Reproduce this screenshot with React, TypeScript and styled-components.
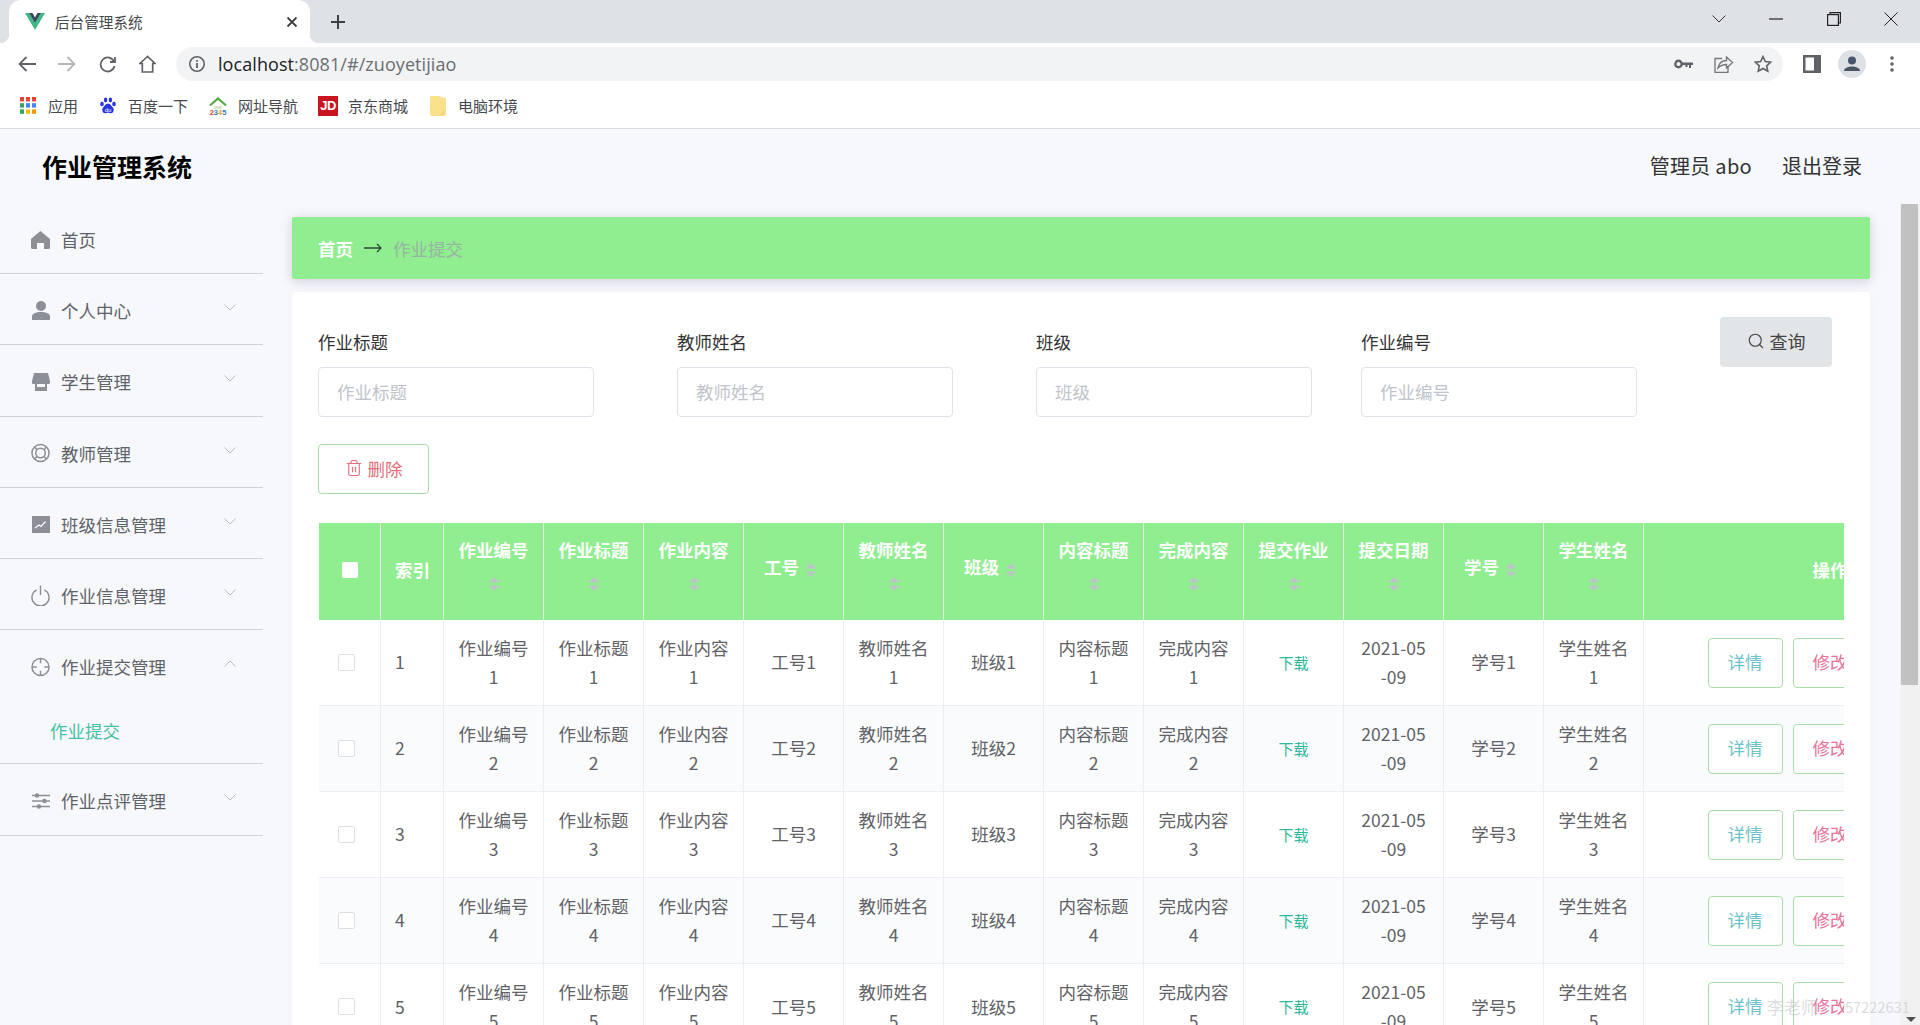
import React from 'react';
import styled, { createGlobalStyle } from 'styled-components';
import { Search, Trash2 } from 'lucide-react';

const CJK = `"Noto Sans CJK SC", "Open Sans", sans-serif`;

const GlobalStyle = createGlobalStyle`
  html, body {
    margin: 0;
    height: 100%;
    overflow: hidden;
    font-family: ${CJK};
    background: #f6f8fc;
  }
  * { box-sizing: border-box; }
`;

const Page = styled.div`
  position: relative;
  width: 1920px;
  height: 1025px;
  overflow: hidden;
  display: flex;
  flex-direction: column;
`;

/* browser chrome */
const TabStrip = styled.div`
  height: 43px;
  flex: none;
  background: #dee1e6;
  display: flex;
  align-items: flex-end;
  padding-left: 9px;
`;

const Tab = styled.div`
  position: relative;
  width: 301px;
  height: 43px;
  background: #fff;
  border-radius: 12px 12px 0 0;
  display: flex;
  align-items: center;
  padding: 0 12px 0 16px;
  font-size: 14.6px;
  color: #45484c;

  &::before, &::after {
    content: '';
    position: absolute;
    bottom: 0;
    width: 9px;
    height: 9px;
  }
  &::before {
    left: -9px;
    background: radial-gradient(circle at 0 0, #dee1e6 9px, #fff 9.5px);
  }
  &::after {
    right: -9px;
    background: radial-gradient(circle at 100% 0, #dee1e6 9px, #fff 9.5px);
  }
`;

const TabTitle = styled.span`
  margin-left: 10px;
  flex: 1;
`;

const NewTab = styled.div`
  margin-left: 15px;
  width: 26px;
  height: 43px;
  display: flex;
  align-items: center;
  justify-content: center;
`;

const WindowControls = styled.div`
  margin-left: auto;
  display: flex;
  align-self: stretch;
`;

const WindowButton = styled.div`
  width: 57.5px;
  display: flex;
  align-items: center;
  justify-content: center;
  padding-bottom: 6px;
`;

const Toolbar = styled.div`
  height: 42px;
  flex: none;
  background: #fff;
  display: flex;
  align-items: center;
  padding: 0 8px 0 7px;
`;

const ToolButton = styled.div`
  width: 40px;
  height: 34px;
  flex: none;
  display: flex;
  align-items: center;
  justify-content: center;
`;

const Omnibox = styled.div`
  flex: 1;
  height: 34px;
  margin: 0 9px;
  border-radius: 17px;
  background: #f1f3f4;
  display: flex;
  align-items: center;
  padding-left: 12px;
`;

const Url = styled.div`
  margin-left: 12px;
  flex: 1;
  font-family: "Open Sans", sans-serif;
  font-size: 18px;
  letter-spacing: 0.07px;
  color: #6b6e72;

  b {
    font-weight: 400;
    color: #202124;
  }
`;

const Bookmarks = styled.div`
  height: 44px;
  flex: none;
  background: #fff;
  border-bottom: 1px solid #d9dce1;
  display: flex;
  align-items: center;
  gap: 20px;
  padding: 0 18px 2px;
`;

const Bookmark = styled.div`
  display: flex;
  align-items: center;
  gap: 10px;
  font-size: 15px;
  color: #45484c;
`;

const BookmarkIcon = styled.span`
  width: 20px;
  height: 20px;
  display: flex;
  align-items: center;
  justify-content: center;
`;

const JdMark = styled.span`
  width: 20px;
  height: 20px;
  background: #c9151e;
  color: #fff;
  font-family: "Liberation Sans", sans-serif;
  font-size: 13px;
  font-weight: 700;
  letter-spacing: -0.5px;
  display: flex;
  align-items: center;
  justify-content: center;
`;

/* app */
const Header = styled.header`
  height: 74px;
  flex: none;
  display: flex;
  align-items: center;
  padding: 0 58px 1px 42px;
`;

const Logo = styled.div`
  font-size: 25px;
  font-weight: 700;
  color: #000;
`;

const HeaderRight = styled.div`
  margin-left: auto;
  display: flex;
  gap: 30px;
  font-size: 20px;
  color: #333;
`;

const UserName = styled.span`
  letter-spacing: 0.3px;
`;

const Body = styled.div`
  flex: 1;
  min-height: 0;
  display: flex;
`;

const Sidebar = styled.nav`
  width: 263px;
  flex: none;
  font-size: 17.5px;
  color: #5f6368;
`;

const MenuItem = styled.div`
  border-bottom: 1px solid #cfd2d8;
`;

const MenuHead = styled.div`
  height: 70.2px;
  display: flex;
  align-items: center;
  padding: 3px 27px 0 31px;
`;

const MenuIcon = styled.span`
  width: 19px;
  height: 20px;
  margin-right: 11px;
  display: flex;
  align-items: center;
  justify-content: center;
`;

const Chevron = styled.svg`
  margin-left: auto;
  margin-bottom: 6px;
`;

const SubItem = styled.div`
  height: 63px;
  display: flex;
  align-items: center;
  padding: 0 0 3px 50px;
  color: #45c2a5;
`;

const Content = styled.main`
  flex: 1;
  min-width: 0;
  padding: 14px 30px 0 29px;
  overflow: hidden;
`;

const ScrollTrack = styled.div`
  position: relative;
  width: 20px;
  flex: none;
  margin-top: 1px;
  background: #f1f1f1;
`;

const ScrollThumb = styled.div`
  margin-left: 1px;
  width: 17px;
  height: 481px;
  background: #c1c1c1;
`;

const ScrollArrow = styled.div`
  position: absolute;
  right: 4px;
  bottom: 3px;
  width: 0;
  height: 0;
  border-left: 5px solid transparent;
  border-right: 5px solid transparent;
  border-top: 5px solid #505050;
`;

const Crumbs = styled.div`
  height: 62px;
  background: #90ee90;
  border-radius: 2px;
  box-shadow: 0 2px 12px rgba(70, 60, 90, 0.22);
  display: flex;
  align-items: center;
  padding: 0 26px;
  font-size: 17.5px;
  gap: 11px;
`;

const CrumbHome = styled.span`
  color: #fff;
  font-weight: 700;
`;

const CrumbCurrent = styled.span`
  color: #97b3a2;
`;

const Card = styled.section`
  margin-top: 13px;
  height: 900px;
  background: #fff;
  border-radius: 4px;
  padding: 25px 26px 0;
  box-shadow: 0 2px 12px rgba(0, 0, 0, 0.02);
`;

const FormRow = styled.div`
  display: flex;
  align-items: flex-start;
`;

const Field = styled.div<{ $gap: number }>`
  width: 276px;
  margin-right: ${(p) => p.$gap}px;
`;

const FieldLabel = styled.div`
  height: 50px;
  line-height: 50px;
  font-size: 17.5px;
  color: #333;
`;

const TextInput = styled.input`
  display: block;
  width: 100%;
  height: 50px;
  border: 1px solid #dfe2e8;
  border-radius: 4px;
  padding: 0 18px 2px;
  font-family: ${CJK};
  font-size: 17.5px;
  outline: none;

  &::placeholder {
    color: #c0c4cc;
  }
`;

const QueryButton = styled.button`
  width: 112px;
  height: 50px;
  border: 0;
  border-radius: 4px;
  background: #e2e5e8;
  color: #444;
  font-family: ${CJK};
  font-size: 18px;
  display: flex;
  align-items: center;
  justify-content: center;
  gap: 5px;
  padding: 0 0 3px;
`;

const DeleteButton = styled.button`
  display: flex;
  align-items: center;
  justify-content: center;
  gap: 5px;
  margin-top: 27px;
  width: 111px;
  height: 50px;
  background: #fff;
  border: 1px solid #a8dea8;
  border-radius: 4px;
  color: #e4707c;
  font-family: ${CJK};
  font-size: 17.5px;
  padding: 0 0 2px;
`;

const TableWrap = styled.div`
  margin: 29px 0 0 1px;
  width: 1525px;
  overflow: hidden;
`;

const Table = styled.table`
  width: 1698px;
  table-layout: fixed;
  border-collapse: separate;
  border-spacing: 0;
  font-size: 17.5px;
  color: #5f6266;
`;

const Th = styled.th<{ $left?: boolean }>`
  height: 97px;
  padding: ${(p) => (p.$left ? '0 0 4px 14px' : '0 14px 4px')};
  background: #90ee90;
  color: #fff;
  font-weight: 700;
  line-height: 28px;
  text-align: ${(p) => (p.$left ? 'left' : 'center')};
  word-break: break-all;
  border-right: 1px solid #e6f3e6;
`;

const CaretBox = styled.span`
  display: inline-flex;
  width: 24px;
  height: 39px;
  align-items: center;
  justify-content: center;
  vertical-align: middle;
`;

const Td = styled.td<{ $even: boolean; $left?: boolean }>`
  height: 86.1px;
  padding: 0 14px;
  line-height: 28.7px;
  text-align: ${(p) => (p.$left ? 'left' : 'center')};
  word-break: break-all;
  background: ${(p) => (p.$even ? '#fafbfd' : '#fff')};
  border-right: 1px solid #ebeef5;
  border-bottom: 1px solid #ebeef5;
`;

const HeadCheck = styled.span`
  display: block;
  margin: 0 auto;
  width: 16px;
  height: 16px;
  border-radius: 2px;
  background: #fff;
`;

const RowCheck = styled.span`
  display: block;
  margin: 0 0 0 5px;
  width: 17px;
  height: 17px;
  border: 1px solid #dcdfe6;
  border-radius: 2px;
  background: #fff;
`;

const DownloadLink = styled.span`
  font-size: 15px;
  color: #2fb89a;
`;

const Actions = styled.div`
  display: flex;
  justify-content: center;
  gap: 10px;
`;

const ActionButton = styled.button<{ $color: string }>`
  width: 75px;
  height: 50px;
  flex: none;
  padding: 0 0 2px;
  background: #fff;
  border: 1px solid #a8dea8;
  border-radius: 4px;
  font-family: ${CJK};
  font-size: 17.5px;
  color: ${(p) => p.$color};
`;

const Watermark = styled.div`
  position: absolute;
  left: 1767px;
  top: 995px;
  display: flex;
  align-items: center;
  gap: 27px;
  font-size: 17px;
  line-height: 24px;
  color: rgba(190, 190, 190, 0.55);
`;

const WatermarkDigits = styled.span`
  font-size: 14.6px;
`;

const Caret = () => (
  <svg width="10" height="14" viewBox="0 0 10 14">
    <path d="M5 0 10 5.500H0zM5 14 0 8.500h10z" fill="#bcc3c8" />
  </svg>
);

const VueLogo = () => (
  <svg width="20" height="17" viewBox="0 0 20 17">
    <path d="M0 0h4l6 10L16 0h4L10 17z" fill="#41b883" />
    <path d="M4 0h3.5L10 4.5 12.5 0H16l-6 10z" fill="#35495e" />
  </svg>
);

const AppsIcon = () => {
  const colors = ['#ea4335', '#ea4335', '#ea4335', '#34a853', '#4285f4', '#4285f4', '#34a853', '#fbbc05', '#f29900'];
  return (
    <svg width="16" height="17" viewBox="0 0 16 17">
      {colors.map((c, i) => (
        <rect key={i} x={(i % 3) * 6} y={Math.floor(i / 3) * 6.2} width="4" height="4.4" fill={c} />
      ))}
    </svg>
  );
};

const BaiduIcon = () => (
  <svg width="16" height="18" viewBox="0 0 16 18">
    <g fill="#2932e1">
      <ellipse cx="2" cy="7" rx="1.8" ry="2.3" />
      <ellipse cx="5.6" cy="3" rx="1.7" ry="2.4" />
      <ellipse cx="10.4" cy="3" rx="1.7" ry="2.4" />
      <ellipse cx="14" cy="7" rx="1.8" ry="2.3" />
      <path d="M8 6.5c2.4 0 3 2.4 4.7 3.8 1.8 1.6 1.2 6-1.7 6-1.2 0-1.900-.5-3-.5s-1.800.5-3 .5c-2.900 0-3.500-4.400-1.700-6C5 8.900 5.600 6.500 8 6.500z" />
    </g>
    <text x="8" y="15" textAnchor="middle" fontSize="6" fill="#fff" fontFamily="Liberation Sans">du</text>
  </svg>
);

const Icon2345 = () => (
  <svg width="20" height="20" viewBox="0 0 20 20">
    <path d="M1 9 10 1l9 8-1.800 1L10 4 2.800 10z" fill="#5aa845" />
    <path d="M6 10h8v3H6z" fill="#d5e8c8" />
    <text x="10" y="19" textAnchor="middle" fontSize="7.500" fontWeight="700" fill="#d43f3a" fontFamily="Liberation Sans">
      2<tspan fill="#2f7fc1">3</tspan><tspan fill="#e0a020">4</tspan><tspan fill="#2f7fc1">5</tspan>
    </text>
  </svg>
);

const FolderIcon = () => (
  <svg width="16" height="20" viewBox="0 0 16 20">
    <path d="M1 0h9l1.500 1.500H14a2 2 0 0 1 2 2V18a2 2 0 0 1-2 2H2a2 2 0 0 1-2-2V1a1 1 0 0 1 1-1z" fill="#fbe08a" />
    <path d="M12 19l2-4" stroke="#e8c860" fill="none" />
  </svg>
);

const SideIcon = ({ name }: { name: string }) => {
  const c = '#8c8f96';
  if (name === 'home') {
    return (
      <svg width="19" height="18" viewBox="0 0 19 18">
        <path d="M9.500 0 19 8v8.500a1.500 1.500 0 0 1-1.500 1.500H13v-6H6v6H1.500A1.500 1.500 0 0 1 0 16.500V8z" fill={c} />
      </svg>
    );
  }
  if (name === 'user') {
    return (
      <svg width="18" height="19" viewBox="0 0 18 19">
        <circle cx="9" cy="5" r="5" fill={c} />
        <path d="M0 15.500C0 12.500 4 11 9 11s9 1.500 9 4.500V19H0z" fill={c} />
      </svg>
    );
  }
  if (name === 'store') {
    return (
      <svg width="18" height="18" viewBox="0 0 18 18">
        <path d="M2 0h14l2 8a2 2 0 0 1-2 3H2a2 2 0 0 1-2-3z" fill={c} />
        <path d="M3 11v7h12v-7h-2v3H5v-3z" fill={c} />
      </svg>
    );
  }
  if (name === 'buoy') {
    return (
      <svg width="20" height="20" viewBox="0 0 20 20" fill="none" stroke={c} strokeWidth="1.600">
        <circle cx="10" cy="10" r="9" />
        <circle cx="10" cy="10" r="5" />
        <path d="M4 4l2.500 2.500M16 4l-2.500 2.500M4 16l2.500-2.500M16 16l-2.500-2.500" />
      </svg>
    );
  }
  if (name === 'chart') {
    return (
      <svg width="18" height="17" viewBox="0 0 18 17">
        <rect width="18" height="17" fill={c} />
        <path d="M3 12l4-3 2 1.500 4-4.500 1 0" stroke="#fff" strokeWidth="1.200" fill="none" />
      </svg>
    );
  }
  if (name === 'power') {
    return (
      <svg width="20" height="21" viewBox="0 0 20 21" fill="none" stroke={c} strokeWidth="1.500">
        <path d="M6 4.500a9 9 0 1 0 8 0" />
        <path d="M10 0v10" />
      </svg>
    );
  }
  if (name === 'target') {
    return (
      <svg width="20" height="20" viewBox="0 0 20 20" fill="none" stroke={c} strokeWidth="1.500">
        <circle cx="10" cy="10" r="9" />
        <path d="M10 1v5M10 14v5M1 10h5M14 10h5" />
      </svg>
    );
  }
  return (
    <svg width="18" height="16" viewBox="0 0 18 16" fill="none" stroke={c} strokeWidth="1.400">
      <path d="M0 2.500h18M0 8h18M0 13.500h18" />
      <circle cx="5" cy="2.500" r="1.500" fill={c} />
      <circle cx="12.500" cy="8" r="1.500" fill={c} />
      <circle cx="7" cy="13.500" r="1.500" fill={c} />
    </svg>
  );
};

const ChevronIcon = ({ up }: { up?: boolean }) => (
  <Chevron width="12" height="7" viewBox="0 0 12 7" fill="none" stroke="#b8bbc0" strokeWidth="1">
    <path d={up ? 'M0.500 6.500 6 1l5.500 5.500' : 'M0.500 0.500 6 6l5.500-5.500'} />
  </Chevron>
);

const menus = [
  { icon: 'home', label: '首页', noArrow: true },
  { icon: 'user', label: '个人中心' },
  { icon: 'store', label: '学生管理' },
  { icon: 'buoy', label: '教师管理' },
  { icon: 'chart', label: '班级信息管理' },
  { icon: 'power', label: '作业信息管理' },
  { icon: 'target', label: '作业提交管理', open: '作业提交' },
  { icon: 'sliders', label: '作业点评管理' },
];

const fields = [
  { label: '作业标题', gap: 83 },
  { label: '教师姓名', gap: 83 },
  { label: '班级', gap: 49 },
  { label: '作业编号', gap: 83 },
];

const columns = ['作业编号', '作业标题', '作业内容', '工号', '教师姓名', '班级', '内容标题', '完成内容', '提交作业', '提交日期', '学号', '学生姓名'];
const rows = [1, 2, 3, 4, 5];

const App: React.FC = () => (
  <Page>
    <GlobalStyle />
    <TabStrip>
      <Tab>
        <VueLogo />
        <TabTitle>后台管理系统</TabTitle>
        <svg width="12" height="12" viewBox="0 0 12 12" stroke="#3c4043" strokeWidth="1.800">
          <path d="M1.500 1.500l9 9M10.500 1.500l-9 9" />
        </svg>
      </Tab>
      <NewTab>
        <svg width="16" height="16" viewBox="0 0 16 16" stroke="#3c4043" strokeWidth="2">
          <path d="M8 1v14M1 8h14" />
        </svg>
      </NewTab>
      <WindowControls>
        <WindowButton>
          <svg width="14" height="8" viewBox="0 0 14 8" fill="none" stroke="#333" strokeWidth="1">
            <path d="M0.500 0.500 7 7l6.500-6.500" />
          </svg>
        </WindowButton>
        <WindowButton>
          <svg width="14" height="2" viewBox="0 0 14 2" stroke="#222" strokeWidth="1.200">
            <path d="M0 1h14" />
          </svg>
        </WindowButton>
        <WindowButton>
          <svg width="14" height="14" viewBox="0 0 14 14" fill="none" stroke="#222" strokeWidth="1.200">
            <rect x="0.600" y="2.600" width="10.800" height="10.800" />
            <path d="M3 2.500V0.600h10.400V11h-2" />
          </svg>
        </WindowButton>
        <WindowButton>
          <svg width="14" height="14" viewBox="0 0 14 14" stroke="#222" strokeWidth="1">
            <path d="M0.500 0.500l13 13M13.500 0.500l-13 13" />
          </svg>
        </WindowButton>
      </WindowControls>
    </TabStrip>

    <Toolbar>
      <ToolButton>
        <svg width="18" height="16" viewBox="0 0 18 16" fill="none" stroke="#5f6368" strokeWidth="1.800">
          <path d="M18 8H2M8.500 1 1.500 8l7 7" />
        </svg>
      </ToolButton>
      <ToolButton>
        <svg width="18" height="16" viewBox="0 0 18 16" fill="none" stroke="#b4b6b9" strokeWidth="1.800">
          <path d="M0 8h16M9.500 1l7 7-7 7" />
        </svg>
      </ToolButton>
      <ToolButton>
        <svg width="17" height="17" viewBox="0 0 17 17" fill="none" stroke="#5f6368" strokeWidth="1.800">
          <path d="M15 5.500A7 7 0 1 0 15.500 10" />
          <path d="M16 1v5h-5" />
        </svg>
      </ToolButton>
      <ToolButton>
        <svg width="17" height="18" viewBox="0 0 17 18" fill="none" stroke="#5f6368" strokeWidth="1.700">
          <path d="M8.500 1.500 1 8.500h2.300V17h10.400V8.500H16z" />
        </svg>
      </ToolButton>
      <Omnibox>
        <svg width="18" height="18" viewBox="0 0 18 18" fill="none" stroke="#5f6368" strokeWidth="1.600">
          <circle cx="9" cy="9" r="7.200" />
          <path d="M9 8v5M9 5v1.700" strokeWidth="1.800" />
        </svg>
        <Url><b>localhost</b>:8081/#/zuoyetijiao</Url>
        <ToolButton>
          <svg width="19" height="10" viewBox="0 0 19 10">
            <circle cx="4.500" cy="5" r="3.200" fill="none" stroke="#5f6368" strokeWidth="2.400" />
            <path d="M8 3.500h11v2.500h-2v3h-2V6h-1.500v2h-2V6H8z" fill="#5f6368" />
          </svg>
        </ToolButton>
        <ToolButton>
          <svg width="19" height="18" viewBox="0 0 19 18" fill="none" stroke="#74777b" strokeWidth="1.300">
            <path d="M8 3.500H1v14h13V11" />
            <path d="M4 13c1-5 4-7.500 8.500-7.500V2l6 5.500-6 5.500V9.500C9 9.500 6.500 10.500 4 13z" />
          </svg>
        </ToolButton>
        <ToolButton>
          <svg width="18" height="18" viewBox="0 0 18 18" fill="none" stroke="#5f6368" strokeWidth="1.600">
            <path d="M9 1.500l2.300 5 5.400.6-4 3.700 1.100 5.400L9 13.500l-4.800 2.700 1.100-5.400-4-3.700 5.400-.6z" />
          </svg>
        </ToolButton>
      </Omnibox>
      <ToolButton>
        <svg width="18" height="18" viewBox="0 0 18 18">
          <path d="M0 0h18v18H0zM2.500 2.500v13h8.500v-13z" fill="#5f6368" fillRule="evenodd" />
        </svg>
      </ToolButton>
      <ToolButton>
        <svg width="28" height="28" viewBox="0 0 28 28">
          <circle cx="14" cy="14" r="14" fill="#dee1e6" />
          <circle cx="14" cy="10.500" r="4" fill="#4a5568" />
          <path d="M6 21c0-3 4-4.500 8-4.500s8 1.500 8 4.500z" fill="#4a5568" />
        </svg>
      </ToolButton>
      <ToolButton>
        <svg width="4" height="16" viewBox="0 0 4 16" fill="#5f6368">
          <circle cx="2" cy="2" r="1.800" />
          <circle cx="2" cy="8" r="1.800" />
          <circle cx="2" cy="14" r="1.800" />
        </svg>
      </ToolButton>
    </Toolbar>

    <Bookmarks>
      <Bookmark><BookmarkIcon><AppsIcon /></BookmarkIcon>应用</Bookmark>
      <Bookmark><BookmarkIcon><BaiduIcon /></BookmarkIcon>百度一下</Bookmark>
      <Bookmark><BookmarkIcon><Icon2345 /></BookmarkIcon>网址导航</Bookmark>
      <Bookmark><JdMark>JD</JdMark>京东商城</Bookmark>
      <Bookmark><BookmarkIcon><FolderIcon /></BookmarkIcon>电脑环境</Bookmark>
    </Bookmarks>

    <Header>
      <Logo>作业管理系统</Logo>
      <HeaderRight>
        <UserName>管理员 abo</UserName>
        <span>退出登录</span>
      </HeaderRight>
    </Header>

    <Body>
      <Sidebar>
        {menus.map((m) => (
          <MenuItem key={m.label}>
            <MenuHead>
              <MenuIcon><SideIcon name={m.icon} /></MenuIcon>
              {m.label}
              {!m.noArrow && <ChevronIcon up={!!m.open} />}
            </MenuHead>
            {m.open && <SubItem>{m.open}</SubItem>}
          </MenuItem>
        ))}
      </Sidebar>

      <Content>
        <Crumbs>
          <CrumbHome>首页</CrumbHome>
          <svg width="18" height="10" viewBox="0 0 18 10" fill="none" stroke="#2f4a38" strokeWidth="1.300">
            <path d="M0 5h17M13 1l4 4-4 4" />
          </svg>
          <CrumbCurrent>作业提交</CrumbCurrent>
        </Crumbs>

        <Card>
          <FormRow>
            {fields.map((f) => (
              <Field key={f.label} $gap={f.gap}>
                <FieldLabel>{f.label}</FieldLabel>
                <TextInput placeholder={f.label} />
              </Field>
            ))}
            <QueryButton>
              <Search size={18} strokeWidth={1.5} />
              查询
            </QueryButton>
          </FormRow>

          <DeleteButton>
            <Trash2 size={18} strokeWidth={1.5} />
            删除
          </DeleteButton>

          <TableWrap>
            <Table>
              <colgroup>
                <col style={{ width: 62 }} />
                <col style={{ width: 63 }} />
                {columns.map((c) => <col key={c} style={{ width: 100 }} />)}
                <col style={{ width: 373 }} />
              </colgroup>
              <thead>
                <tr>
                  <Th><HeadCheck /></Th>
                  <Th $left>索引</Th>
                  {columns.map((c) => (
                    <Th key={c}>
                      {c}
                      <CaretBox><Caret /></CaretBox>
                    </Th>
                  ))}
                  <Th>操作</Th>
                </tr>
              </thead>
              <tbody>
                {rows.map((n) => {
                  const even = n % 2 === 0;
                  return (
                    <tr key={n}>
                      <Td $even={even}><RowCheck /></Td>
                      <Td $even={even} $left>{n}</Td>
                      {columns.map((c) => {
                        if (c === '提交作业') {
                          return <Td key={c} $even={even}><DownloadLink>下载</DownloadLink></Td>;
                        }
                        if (c === '提交日期') {
                          return <Td key={c} $even={even}>2021-05<br />-09</Td>;
                        }
                        return <Td key={c} $even={even}>{c}{n}</Td>;
                      })}
                      <Td $even={even}>
                        <Actions>
                          <ActionButton $color="#6cc3c8">详情</ActionButton>
                          <ActionButton $color="#e8709a">修改</ActionButton>
                          <ActionButton $color="#e4707c">删除</ActionButton>
                        </Actions>
                      </Td>
                    </tr>
                  );
                })}
              </tbody>
            </Table>
          </TableWrap>
        </Card>
      </Content>

      <ScrollTrack>
        <ScrollThumb />
        <ScrollArrow />
      </ScrollTrack>
    </Body>

    <Watermark>
      <span>李老师</span>
      <WatermarkDigits>57222631</WatermarkDigits>
    </Watermark>
  </Page>
);

export default App;
